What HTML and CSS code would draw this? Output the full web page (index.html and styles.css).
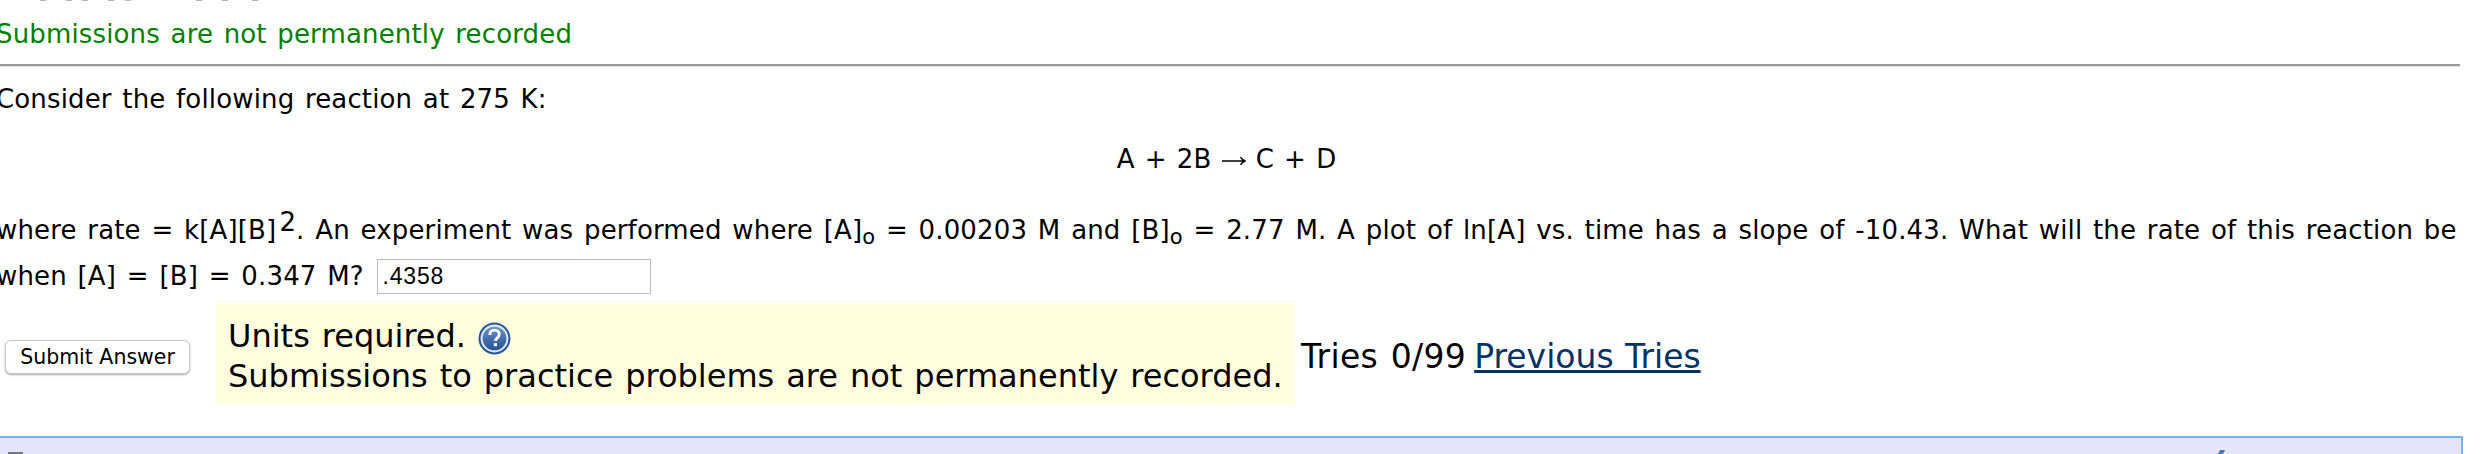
FILE: index.html
```html
<!DOCTYPE html>
<html lang="en">
<head>
<meta charset="utf-8">
<title>Problem</title>
<link rel="stylesheet" href="styles.css">
</head>
<body>
<main class="page">
  <svg class="clipped-head" width="300" height="2" aria-hidden="true">
    <g fill="#b9b4bb">
      <rect x="44" y="0" width="6" height="1"/><rect x="70" y="0" width="6" height="1"/><rect x="86" y="0" width="6" height="1"/><rect x="112" y="0" width="6" height="1"/><rect x="129" y="0" width="6" height="1"/><rect x="200" y="0" width="6" height="1"/><rect x="226" y="0" width="6" height="1"/><rect x="256" y="0" width="6" height="1"/>
    </g>
  </svg>
  <div class="status">Submissions are not permanently recorded</div>
  <div class="rule"></div>
  <p class="intro">Consider the following reaction at 275 K:</p>
  <div class="equation">A + 2B <svg class="arrow" viewBox="0 0 24 12" width="24" height="12" aria-hidden="true"><path d="M0 6H23M18.5 2.2C19.5 4 21 5.4 23.5 6C21 6.6 19.5 8 18.5 9.8" fill="none" stroke="#000" stroke-width="1.4"/></svg> C + D</div>
  <p class="question">where rate = k[A][B]<sup>2</sup>. An experiment was performed where [A]<sub>o</sub> = 0.00203 M and [B]<sub>o</sub> = 2.77 M. A plot of ln[A] vs. time has a slope of -10.43. What will the rate of this reaction be<br>when [A] = [B] = 0.347 M? <input class="answer" type="text" value=".4358"></p>
  <div class="actions">
    <button class="submit" type="button">Submit Answer</button>
    <div class="message">
      <div class="message-line">Units required. <svg class="help" viewBox="0 0 32 32" width="33" height="33" aria-hidden="true"><defs><linearGradient id="helpfill" x1="0" y1="0" x2="0" y2="1"><stop offset="0" stop-color="#6f94c8"/><stop offset="1" stop-color="#1f4f95"/></linearGradient></defs><circle cx="16" cy="16" r="15.5" fill="#2b5797"/><circle cx="16" cy="16" r="12.5" fill="url(#helpfill)" stroke="#dfe8f3" stroke-width="2"/><path d="M11.5 12.5c0-3 2-4.6 4.6-4.6 2.7 0 4.5 1.7 4.5 4 0 3.4-3.7 3.5-3.7 6.6" fill="none" stroke="#fff" stroke-width="2.8"/><rect x="15.4" y="20.5" width="3" height="3" fill="#fff"/></svg></div>
      <div class="message-line">Submissions to practice problems are not permanently recorded.</div>
    </div>
    <div class="tries"><span class="tries-count">Tries 0/99</span><a href="#">Previous Tries</a></div>
  </div>
  <div class="panel">
    <span class="panel-mark-left"></span>
    <span class="panel-mark-right"></span>
  </div>
</main>
</body>
</html>
```
FILE: styles.css
```css
html, body { margin: 0; padding: 0; background: #fff; overflow: hidden; height: 454px; }
body { font-family: "DejaVu Sans", Verdana, sans-serif; color: #000; }
.page { margin-left: -4px; width: 2467px; font-size: 26px; line-height: 46px; letter-spacing: 0.15px; word-spacing: 2.2px; }
.clipped-head { display: block; height: 2px; }
.status { color: #008000; margin-top: 14px; line-height: 36px; }
.rule { height: 2px; background: #999; border-bottom: 1px solid #e6e6e6; margin: 12px 3px 0 4px; }
.intro { margin: 9px 0 0; line-height: 46px; }
.equation { text-align: center; margin-top: 14px; line-height: 46px; padding-right: 6px; word-spacing: 1.7px; }
.arrow { vertical-align: 1px; }
.question { margin: 25px 0 0; line-height: 46px; word-spacing: 2.3px; }
sup, sub { line-height: 0; }
sup { font-size: 26px; vertical-align: 8px; margin-left: 3px; }
sub { font-size: 21px; vertical-align: -5px; }
.answer { width: 262px; height: 33px; margin-left: 2px; padding: 0 5px; border: 1px solid #bbb; font: 23px "Liberation Sans", Arial, sans-serif; letter-spacing: 0.8px; word-spacing: 0; vertical-align: middle; box-sizing: content-box; position: relative; top: -1px; }
.actions { display: flex; align-items: center; margin-top: 4px; margin-left: 9px; }
.submit { width: 185px; height: 34px; padding: 0; background: #fff; border: 1px solid #c8c8c8; border-radius: 6px; box-shadow: 0 1px 2px #aaa; font: 20.5px "DejaVu Sans", sans-serif; position: relative; top: 3px; }
.message { margin-left: 26px; width: 1079px; height: 102px; box-sizing: border-box; padding: 13px 0 0 12px; background: #ffffe0; font-size: 32px; line-height: 40px; letter-spacing: 0; word-spacing: 1.8px; }
.message-line { white-space: nowrap; }
.help { vertical-align: middle; }
.tries { display: flex; gap: 8px; margin-left: 6px; font-size: 33px; white-space: nowrap; letter-spacing: 0; position: relative; top: 3px; }
.tries-count { letter-spacing: 0.3px; word-spacing: 2px; }
.tries a { color: #003366; word-spacing: 1px; }
.panel { position: relative; height: 30px; margin-top: 31px; background: #e4e4fb; border: 2px solid #7ab0f0; border-bottom: 0; }
.panel-mark-left { position: absolute; left: 10px; top: 14px; width: 15px; height: 2px; background: #777; }
.panel-mark-right { position: absolute; left: 2221px; top: 12px; width: 5px; height: 4px; background: #4a78b8; transform: skewX(-30deg); }
```
